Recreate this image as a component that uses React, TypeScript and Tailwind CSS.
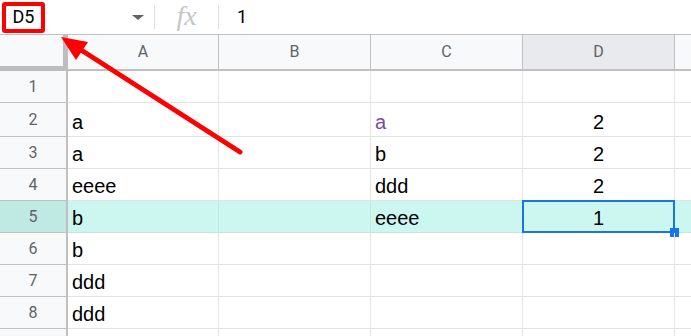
import React from "react";

type Row = { n: number; label: string; h: string; cells: string[] };

const rows: Row[] = [
  { n: 1, label: "1", h: "h-[32px]", cells: ["", "", "", ""] },
  { n: 2, label: "2", h: "h-[34px]", cells: ["a", "", "a", "2"] },
  { n: 3, label: "3", h: "h-[32px]", cells: ["a", "", "b", "2"] },
  { n: 4, label: "4", h: "h-[32px]", cells: ["eeee", "", "ddd", "2"] },
  { n: 5, label: "5", h: "h-[32px]", cells: ["b", "", "eeee", "1"] },
  { n: 6, label: "6", h: "h-[32px]", cells: ["b", "", "", ""] },
  { n: 7, label: "7", h: "h-[32px]", cells: ["ddd", "", "", ""] },
  { n: 8, label: "8", h: "h-[32px]", cells: ["ddd", "", "", ""] },
  // row 9 only peeks in at the bottom edge, its number is off screen
  { n: 9, label: "", h: "h-[32px]", cells: ["", "", "", ""] },
];

const headers = ["A", "B", "C", "D"];

const Arrow = () => (
  <svg className="absolute inset-0 pointer-events-none" width="691" height="336" viewBox="0 0 691 336">
    <line x1="240" y1="152" x2="78" y2="48" stroke="#ff0000" strokeWidth="5" strokeLinecap="round" />
    <polygon points="61,37 76,60 88,42" fill="#ff0000" />
  </svg>
);

export default function App() {
  return (
    <div className="relative w-[691px] h-[336px] overflow-hidden bg-white font-['Roboto',sans-serif]">
      {/* formula bar */}
      <div className="flex items-center h-[34px]">
        <div className="flex items-center w-[154px] h-full pl-[2px] pr-[10px]">
          <span className="flex items-center justify-center w-[43px] h-[31px] border-[4px] border-[#ff0000] rounded-[3px] text-[18px] text-black leading-none">
            D5
          </span>
          <span className="ml-auto w-0 h-0 border-x-[6px] border-t-[5px] border-x-transparent border-t-[#5f6368]" />
        </div>
        <div className="w-px h-[24px] bg-[#dadce0]" />
        <div className="flex items-center justify-center w-[63px] h-full">
          <span className="font-['Liberation_Serif',serif] italic text-[28px] text-[#c4c7c5] leading-none -mt-[2px]">fx</span>
        </div>
        <div className="w-px h-[24px] bg-[#dadce0]" />
        <span className="pl-[18px] text-[18px] text-black leading-none">1</span>
      </div>

      {/* grid */}
      <div className="grid grid-cols-[68px_151px_152px_152px_152px_1fr] border-t border-[#c0c0c0]">
        <div className="h-[36px] bg-[#f8f9fa] border-b-2 border-[#c0c0c0] flex">
          <div className="flex-1 border-r-[5px] border-b-[5px] border-[#bdbdbd] -mb-[2px]" />
        </div>
        {headers.map((c) => (
          <div
            key={c}
            className={`h-[36px] flex items-center justify-center border-r border-b-2 border-[#c0c0c0] text-[16px] text-[#5f6368] ${c === "D" ? "bg-[#e8eaed]" : "bg-[#f8f9fa]"}`}
          >
            {c}
          </div>
        ))}
        <div className="h-[36px] bg-[#f8f9fa] border-b-2 border-[#c0c0c0]" />

        {rows.map((r) => {
          const sel = r.n === 5;
          return (
            <React.Fragment key={r.n}>
              <div
                className={`${r.h} flex items-center justify-center border-r-2 border-b border-[#c0c0c0] text-[16px] text-[#5f6368] ${sel ? "bg-[#bfe9e3]" : "bg-[#f8f9fa]"}`}
              >
                {r.label}
              </div>
              {r.cells.map((v, i) => (
                <div
                  key={i}
                  className={`${r.h} relative flex items-end pb-[2px] border-r border-b font-['Liberation_Sans',Arial,sans-serif] text-[20px] leading-[23px] ${sel ? "bg-[#ccf7f1] border-[#c5e3df]" : "border-[#e2e3e3]"} ${i === 3 ? "justify-center" : "pl-[4px]"} ${r.n === 2 && i === 2 ? "text-[#7b4a9c]" : "text-black"}`}
                >
                  {v}
                  {sel && i === 3 && (
                    <>
                      <div className="absolute -left-px -top-px -right-px -bottom-px border-2 border-[#1a73e8]" />
                      <div className="absolute -right-[5px] -bottom-[5px] w-[9px] h-[9px] bg-[#1a73e8]" />
                    </>
                  )}
                </div>
              ))}
              <div className={`${r.h} border-b ${sel ? "bg-[#ccf7f1] border-[#c5e3df]" : "border-[#e2e3e3]"}`} />
            </React.Fragment>
          );
        })}
      </div>

      <Arrow />
    </div>
  );
}
